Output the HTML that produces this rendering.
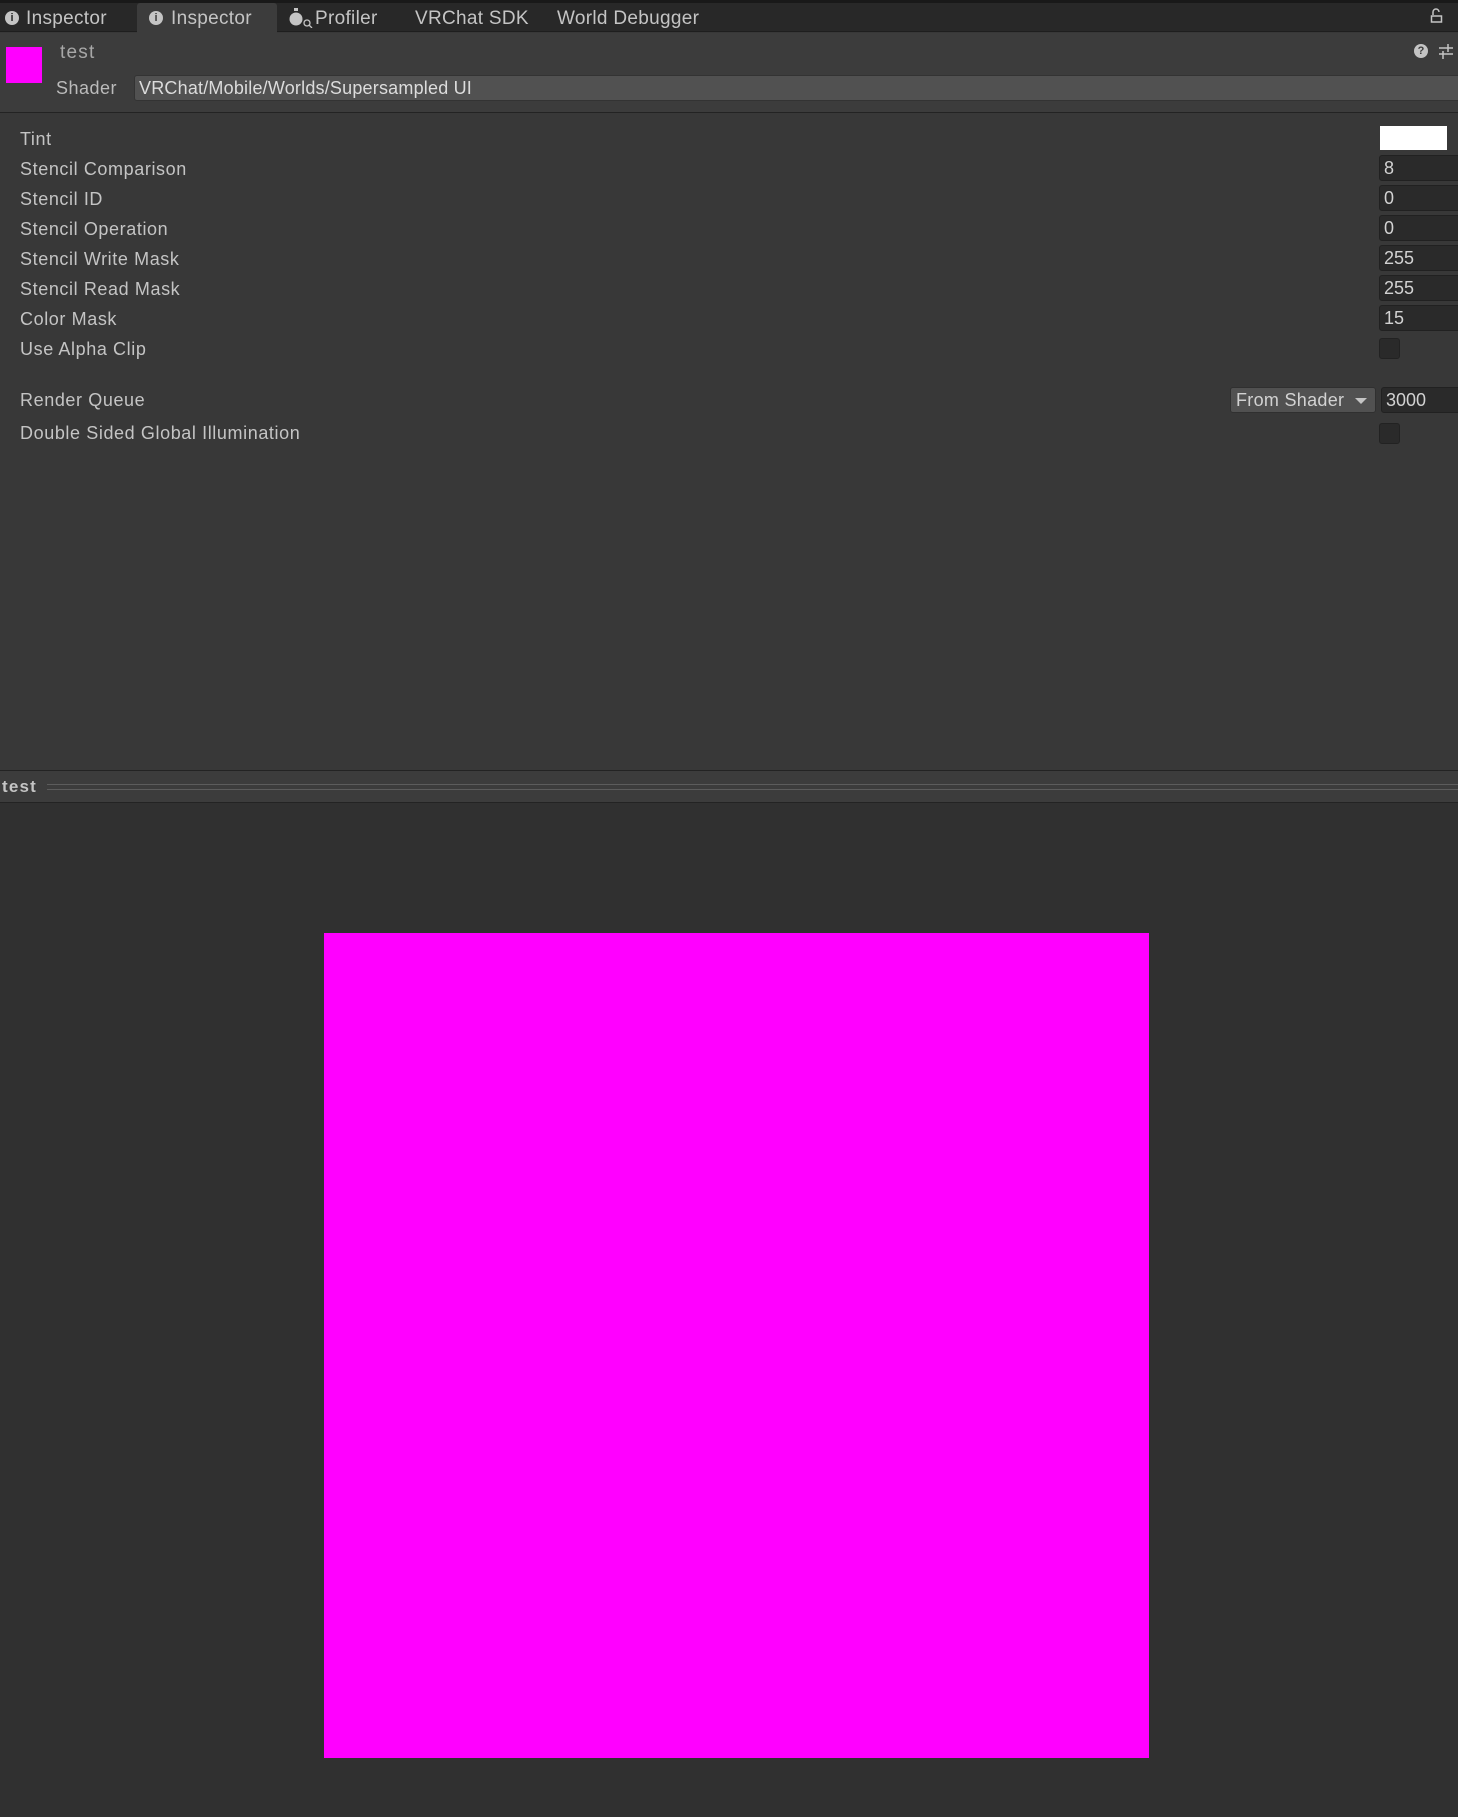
<!DOCTYPE html>
<html><head><meta charset="utf-8"><style>
*{margin:0;padding:0;box-sizing:border-box}
body{width:1458px;height:1817px;background:#383838;position:relative;overflow:hidden;font-family:"Liberation Sans",sans-serif;color:#c4c4c4;font-size:18px}
.a{position:absolute}
.lbl{position:absolute;left:20px;height:30px;line-height:30px;letter-spacing:0.6px;white-space:nowrap}
.fld{position:absolute;left:1379px;width:90px;height:26px;background:#2a2a2a;border:1px solid #212121;border-radius:3px;line-height:24px;padding-left:4px;color:#d2d2d2}
.cb{position:absolute;left:1379px;width:21px;height:21px;background:#2a2a2a;border:1px solid #222;border-radius:3px}
.tab{position:absolute;top:5px;line-height:28px;font-size:19px;letter-spacing:0.3px}
</style></head><body>
<div class="a" style="left:0;top:0;width:1458px;height:3px;background:#191919"></div>
<div class="a" style="left:0;top:3px;width:1458px;height:29px;background:#282828;border-bottom:1px solid #1e1e1e"></div>
<div class="a" style="left:137px;top:3px;width:140px;height:30px;background:#3c3c3c;border-radius:3px 3px 0 0"></div>
<div class="a" style="left:5px;top:11px;width:14px;height:14px;border-radius:50%;background:#c4c4c4;color:#282828;font-size:11px;font-weight:bold;text-align:center;line-height:14px">i</div>
<div class="tab" style="left:26px">Inspector</div>
<div class="a" style="left:149px;top:11px;width:14px;height:14px;border-radius:50%;background:#c4c4c4;color:#3c3c3c;font-size:11px;font-weight:bold;text-align:center;line-height:14px">i</div>
<div class="tab" style="left:171px">Inspector</div>
<svg class="a" style="left:289px;top:8px" width="24" height="20"><rect x="5" y="0" width="4" height="3" fill="#c4c4c4"/><circle cx="7" cy="11" r="6.5" fill="#c4c4c4"/><circle cx="18" cy="15" r="3" fill="none" stroke="#c4c4c4" stroke-width="1.3"/><path d="M20 17l3 3" stroke="#c4c4c4" stroke-width="1.3"/></svg>
<div class="tab" style="left:315px">Profiler</div>
<div class="tab" style="left:415px">VRChat SDK</div>
<div class="tab" style="left:557px">World Debugger</div>
<svg class="a" style="left:1430px;top:8px" width="14" height="16"><path d="M3 7V4a3 3 0 0 1 6 0" fill="none" stroke="#c4c4c4" stroke-width="1.5"/><rect x="1.5" y="8" width="10" height="6" fill="none" stroke="#c4c4c4" stroke-width="1.5"/></svg>
<div class="a" style="left:0;top:33px;width:1458px;height:80px;background:#3c3c3c;border-bottom:1px solid #232323"></div>
<div class="a" style="left:6px;top:47px;width:36px;height:36px;background:#ff00ff"></div>
<div class="a" style="left:60px;top:40px;line-height:26px;font-size:19px;color:#a8a8a8;letter-spacing:1.2px">test</div>
<div class="a" style="left:56px;top:75px;line-height:26px;font-size:18px;color:#bbb;letter-spacing:0.5px">Shader</div>
<div class="a" style="left:134px;top:75px;width:1330px;height:26px;background:#515151;border:1px solid #333;border-radius:3px;line-height:24px;padding-left:4px;font-size:18px;color:#dcdcdc;letter-spacing:0.2px">VRChat/Mobile/Worlds/Supersampled UI</div>
<div class="a" style="left:1414px;top:44px;width:14px;height:14px;border-radius:50%;background:#c4c4c4;color:#3c3c3c;font-size:11px;font-weight:bold;text-align:center;line-height:14px">?</div>
<svg class="a" style="left:1438px;top:42px" width="16" height="18"><path d="M1 6h14M1 12h14M10 2v8M5 9v8" stroke="#c4c4c4" stroke-width="1.5"/></svg>
<div class="lbl" style="top:124px">Tint</div>
<div class="lbl" style="top:154px">Stencil Comparison</div>
<div class="lbl" style="top:184px">Stencil ID</div>
<div class="lbl" style="top:214px">Stencil Operation</div>
<div class="lbl" style="top:244px">Stencil Write Mask</div>
<div class="lbl" style="top:274px">Stencil Read Mask</div>
<div class="lbl" style="top:304px">Color Mask</div>
<div class="lbl" style="top:334px">Use Alpha Clip</div>
<div class="lbl" style="top:385px">Render Queue</div>
<div class="lbl" style="top:418px">Double Sided Global Illumination</div>
<div class="a" style="left:1380px;top:126px;width:67px;height:24px;background:#fff"></div>
<div class="fld" style="top:155px">8</div>
<div class="fld" style="top:185px">0</div>
<div class="fld" style="top:215px">0</div>
<div class="fld" style="top:245px">255</div>
<div class="fld" style="top:275px">255</div>
<div class="fld" style="top:305px">15</div>
<div class="cb" style="top:338px"></div>
<div class="a" style="left:1230px;top:387px;width:146px;height:26px;background:#515151;border:1px solid #303030;border-radius:3px;line-height:24px;padding-left:5px;color:#d2d2d2;letter-spacing:0.3px">From Shader<span style="position:absolute;right:8px;top:10px;border-left:6px solid transparent;border-right:6px solid transparent;border-top:6px solid #c4c4c4"></span></div>
<div class="fld" style="left:1381px;top:387px">3000</div>
<div class="cb" style="top:423px"></div>
<div class="a" style="left:0;top:770px;width:1458px;height:33px;background:#3c3c3c;border-top:1px solid #232323;border-bottom:1px solid #232323"></div>
<div class="a" style="left:2px;top:771px;line-height:31px;font-weight:bold;font-size:17px;color:#c4c4c4;letter-spacing:1.2px">test</div>
<div class="a" style="left:47px;top:784px;width:1411px;height:1px;background:#5c5c5c"></div>
<div class="a" style="left:47px;top:789px;width:1411px;height:1px;background:#5c5c5c"></div>
<div class="a" style="left:0;top:803px;width:1458px;height:1014px;background:#303030"></div>
<div class="a" style="left:324px;top:933px;width:825px;height:825px;background:#ff00ff"></div>
</body></html>
